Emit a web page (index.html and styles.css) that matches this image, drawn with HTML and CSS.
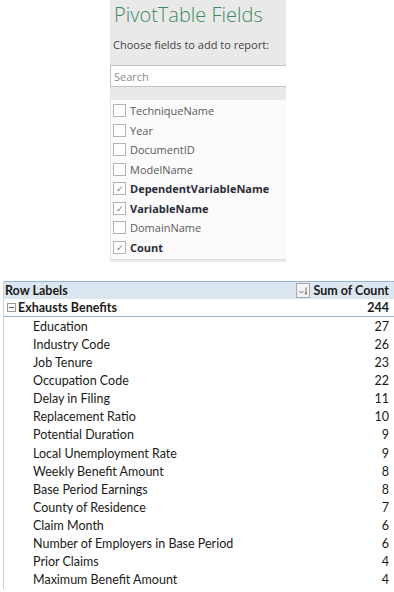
FILE: index.html
```html
<!DOCTYPE html>
<html lang="en">
<head>
    <meta charset="UTF-8">
    <meta name="viewport" content="width=device-width, initial-scale=1.0">
    <title>PivotTable</title>
    <link rel="stylesheet" href="styles.css">
</head>
<body>
    <!-- Panel de campos -->
    <div class="fields-panel">
        <h2 class="panel-title">PivotTable Fields</h2>
        <p class="panel-hint">Choose fields to add to report:</p>
        <div class="search-box">Search</div>
        <ul class="field-list">
            <li><span class="box"></span>TechniqueName</li>
            <li><span class="box"></span>Year</li>
            <li><span class="box"></span>DocumentID</li>
            <li><span class="box"></span>ModelName</li>
            <li class="on"><span class="box">&#10003;</span>DependentVariableName</li>
            <li class="on"><span class="box">&#10003;</span>VariableName</li>
            <li><span class="box"></span>DomainName</li>
            <li class="on"><span class="box">&#10003;</span>Count</li>
        </ul>
    </div>

    <!-- Tabla dinámica -->
    <div class="pivot">
        <div class="row head">
            <span class="label">Row Labels</span>
            <span class="filter">
                <svg width="11" height="10" viewBox="0 0 11 10">
                    <path d="M1.5 5 L3.5 7 L5.5 5" fill="none" stroke="#6a6a6a" stroke-width="1"/>
                    <path d="M8 1.5 V8 M6.8 6.8 L8 8.3 L9.2 6.8" fill="none" stroke="#6a6a6a" stroke-width="1"/>
                </svg>
            </span>
            <span class="value">Sum of Count</span>
        </div>
        <div class="row group">
            <span class="label"><span class="minus"></span>Exhausts Benefits</span>
            <span class="value">244</span>
        </div>
        <div class="row item"><span class="label">Education</span><span class="value">27</span></div>
        <div class="row item"><span class="label">Industry Code</span><span class="value">26</span></div>
        <div class="row item"><span class="label">Job Tenure</span><span class="value">23</span></div>
        <div class="row item"><span class="label">Occupation Code</span><span class="value">22</span></div>
        <div class="row item"><span class="label">Delay in Filing</span><span class="value">11</span></div>
        <div class="row item"><span class="label">Replacement Ratio</span><span class="value">10</span></div>
        <div class="row item"><span class="label">Potential Duration</span><span class="value">9</span></div>
        <div class="row item"><span class="label">Local Unemployment Rate</span><span class="value">9</span></div>
        <div class="row item"><span class="label">Weekly Benefit Amount</span><span class="value">8</span></div>
        <div class="row item"><span class="label">Base Period Earnings</span><span class="value">8</span></div>
        <div class="row item"><span class="label">County of Residence</span><span class="value">7</span></div>
        <div class="row item"><span class="label">Claim Month</span><span class="value">6</span></div>
        <div class="row item"><span class="label">Number of Employers in Base Period</span><span class="value">6</span></div>
        <div class="row item"><span class="label">Prior Claims</span><span class="value">4</span></div>
        <div class="row item"><span class="label">Maximum Benefit Amount</span><span class="value">4</span></div>
    </div>
</body>
</html>
```

FILE: styles.css
```css
body {
    margin: 0;
    padding: 0;
    background: #ffffff;
    font-family: 'Lato', 'Liberation Sans', sans-serif;
    color: #1a1a1a;
    overflow: hidden;
}

/* Panel de campos */
.fields-panel {
    margin-left: 110px;
    width: 176px;
    height: 262px;
    background: #e9e9e9;
    font-family: 'Open Sans', 'Noto Sans', sans-serif;
}

.panel-title {
    margin: 0;
    padding: 1px 0 0 4px;
    height: 30px;
    font-size: 20px;
    font-weight: 300;
    color: #3f8a5e;
}

.panel-hint {
    margin: 0;
    padding: 6px 0 0 3px;
    height: 26px;
    font-size: 11px;
    color: #444;
}

.search-box {
    height: 22px;
    margin-top: 2px;
    background: #ffffff;
    border: 1px solid #c4c4c4;
    border-right: none;
    box-sizing: border-box;
    padding: 3px 0 0 3px;
    font-size: 11px;
    color: #8a8a8a;
}

.field-list {
    list-style: none;
    margin: 13px 0 0 0;
    padding: 1px 0 0 2px;
    height: 160px;
    background: #fbfbfb;
    border-left: 1px solid #e2e2e2;
    border-bottom: 1px solid #dedede;
    box-sizing: border-box;
}

.field-list li {
    display: flex;
    align-items: center;
    height: 19.5px;
    font-size: 11px;
    color: #5a5a5a;
}

.field-list li.on {
    font-weight: bold;
    color: #2b2b3a;
}

.field-list .box {
    width: 11px;
    height: 11px;
    border: 1px solid #b3b3b3;
    background: #fff;
    margin-right: 4px;
    display: flex;
    align-items: center;
    justify-content: center;
    font-size: 9px;
    font-weight: normal;
    color: #7a7a7a;
    flex-shrink: 0;
}

/* Tabla dinámica */
.pivot {
    margin-top: 19px;
    margin-left: 3px;
    border-left: 1px solid #d0d0d0;
    font-size: 12.5px;
}

.row {
    display: flex;
    align-items: center;
    height: 18.13px;
    padding: 0 5px 0 1px;
}

.row .label {
    flex: 1;
    display: flex;
    align-items: center;
}

.row .value {
    text-align: right;
}

.head {
    height: 18px;
    background: #dce6f1;
    border-top: 1px solid #95b3d7;
    box-sizing: border-box;
    font-weight: bold;
}

.head .filter {
    width: 12px;
    height: 13px;
    border: 1px solid #a9a9a9;
    background: #f4f4f4;
    display: flex;
    align-items: center;
    justify-content: center;
    margin-right: 3px;
}

.group {
    font-weight: bold;
    border-bottom: 1px solid #95b3d7;
    box-sizing: border-box;
}

.group .minus {
    width: 7px;
    height: 7px;
    border: 1px solid #9a9a9a;
    margin: 0 2px 0 2px;
    position: relative;
}

.group .minus::after {
    content: "";
    position: absolute;
    left: 1px;
    right: 1px;
    top: 3px;
    height: 1px;
    background: #555;
}

.item .label {
    padding-left: 28px;
}
```
